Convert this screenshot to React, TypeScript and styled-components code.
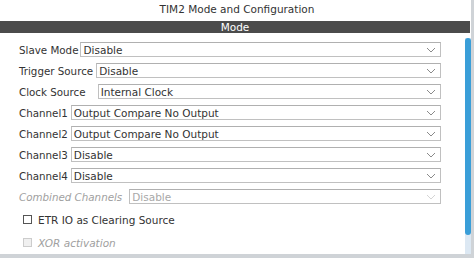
import React from 'react';
import styled, { createGlobalStyle } from 'styled-components';

const GlobalStyle = createGlobalStyle`
    html, body {
        margin: 0;
        padding: 0;
        background: #ffffff;
    }
    body {
        font-family: 'DejaVu Sans', 'Liberation Sans', sans-serif;
    }
`;

type Row = { label: string; value: string; gap?: number; disabled?: boolean };

const rows: Row[] = [
    { label: 'Slave Mode', value: 'Disable', gap: 2 },
    { label: 'Trigger Source', value: 'Disable' },
    { label: 'Clock Source', value: 'Internal Clock', gap: 12 },
    { label: 'Channel1', value: 'Output Compare No Output' },
    { label: 'Channel2', value: 'Output Compare No Output' },
    { label: 'Channel3', value: 'Disable' },
    { label: 'Channel4', value: 'Disable' },
    { label: 'Combined Channels', value: 'Disable', gap: 7, disabled: true }
];

const Chevron = ({ disabled }: { disabled?: boolean }) => (
    <ChevronIcon width='10' height='6' viewBox='0 0 10 6'>
        <path d='M1 1 L5 5 L9 1' fill='none' stroke={disabled ? '#d4d4d4' : '#8a8a8a'} strokeWidth='1' />
    </ChevronIcon>
);

export default function App() {
    return (
        <Frame>
            <GlobalStyle />
            <Window>
                <Title>TIM2 Mode and Configuration</Title>
                <SectionBar>Mode</SectionBar>
                <Body>
                    <Content>
                        {rows.map((row) => (
                            <FieldRow key={row.label} $gap={row.gap ?? 3}>
                                <Label $disabled={row.disabled}>{row.label}</Label>
                                <Select $disabled={row.disabled}>
                                    <span>{row.value}</span>
                                    <Chevron disabled={row.disabled} />
                                </Select>
                            </FieldRow>
                        ))}
                        <CheckRow>
                            <CheckBox />
                            <CheckLabel>ETR IO as Clearing Source</CheckLabel>
                        </CheckRow>
                        <CheckRow $disabled>
                            <CheckBox $disabled />
                            <CheckLabel $disabled>XOR activation</CheckLabel>
                        </CheckRow>
                    </Content>
                    <ScrollLane>
                        <ScrollThumb />
                    </ScrollLane>
                </Body>
            </Window>
        </Frame>
    );
}

const Frame = styled.div`
    width: 474px;
    height: 258px;
    background: #cfd3d7;
    overflow: hidden;
`;

const Window = styled.div`
    width: 471px;
    height: 254px;
    background: #ffffff;
    display: flex;
    flex-direction: column;
`;

const Title = styled.div`
    height: 21px;
    line-height: 19px;
    text-align: center;
    font-size: 10.5px;
    color: #333333;
    padding-left: 3px;
`;

const SectionBar = styled.div`
    height: 12px;
    line-height: 12px;
    background: #4b4b4b;
    color: #ffffff;
    text-align: center;
    font-size: 10.5px;
    margin-right: 1px;
`;

const Body = styled.div`
    flex: 1;
    display: flex;
    min-height: 0;
`;

const Content = styled.div`
    flex: 1;
    padding: 9px 24px 0 19px;
    display: flex;
    flex-direction: column;
    gap: 6px;
`;

const FieldRow = styled.div<{ $gap: number }>`
    display: flex;
    align-items: center;
    gap: ${(p) => p.$gap}px;
    height: 15px;
`;

const Label = styled.span<{ $disabled?: boolean }>`
    font-size: 10.3px;
    white-space: nowrap;
    color: ${(p) => (p.$disabled ? '#a0a0a0' : '#333333')};
    font-style: ${(p) => (p.$disabled ? 'italic' : 'normal')};
`;

const Select = styled.div<{ $disabled?: boolean }>`
    flex: 1;
    height: 15px;
    box-sizing: border-box;
    border: 1px solid #c0c0c0;
    border-top-color: #b0b0b0;
    display: flex;
    align-items: center;
    justify-content: space-between;
    padding: 0 4px 0 2px;
    font-size: 10.5px;
    color: ${(p) => (p.$disabled ? '#a8a8a8' : '#333333')};
    background: #ffffff;
`;

const ChevronIcon = styled.svg`
    display: block;
`;

const CheckRow = styled.div<{ $disabled?: boolean }>`
    display: flex;
    align-items: center;
    gap: 6px;
    padding-left: 4px;
    height: 15px;
    margin-top: 2px;
`;

const CheckBox = styled.span<{ $disabled?: boolean }>`
    width: 9px;
    height: 9px;
    box-sizing: border-box;
    border: 1px solid ${(p) => (p.$disabled ? '#cccccc' : '#555555')};
    background: ${(p) => (p.$disabled ? '#f0f0f0' : '#ffffff')};
`;

const CheckLabel = styled.span<{ $disabled?: boolean }>`
    font-size: 10.5px;
    color: ${(p) => (p.$disabled ? '#a0a0a0' : '#333333')};
    font-style: ${(p) => (p.$disabled ? 'italic' : 'normal')};
`;

const ScrollLane = styled.div`
    width: 6px;
    margin-top: 5px;
    background: #dce8f3;
    display: flex;
    flex-direction: column;
`;

const ScrollThumb = styled.div`
    height: 197px;
    background: #3a9ed8;
    border-radius: 3px;
`;
